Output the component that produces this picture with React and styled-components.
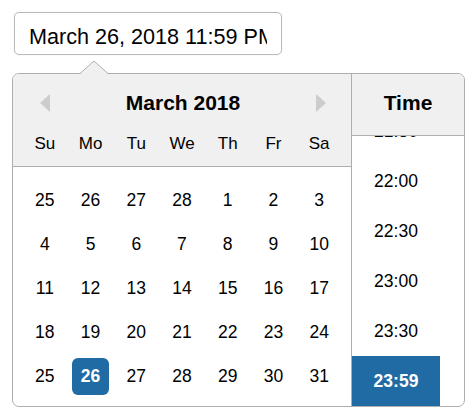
import React from "react";
import styled, { createGlobalStyle } from "styled-components";

const GlobalStyle = createGlobalStyle`
  html, body {
    margin: 0;
    background: #fff;
  }
  body {
    font-family: "Liberation Sans", Arial, Helvetica, sans-serif;
    color: #000;
  }
`;

const dayNames = ["Su", "Mo", "Tu", "We", "Th", "Fr", "Sa"];

const weeks = [
  [25, 26, 27, 28, 1, 2, 3],
  [4, 5, 6, 7, 8, 9, 10],
  [11, 12, 13, 14, 15, 16, 17],
  [18, 19, 20, 21, 22, 23, 24],
  [25, 26, 27, 28, 29, 30, 31],
];

const times = ["21:30", "22:00", "22:30", "23:00", "23:30", "23:59"];

const App = () => {
  return (
    <Page>
      <GlobalStyle />
      <DateInput type="text" readOnly value="March 26, 2018 11:59 PM" />
      <Popup>
        <Arrow width="28" height="14" viewBox="0 0 28 14">
          <polygon points="0,14 14,1 28,14" fill="#f0f0f0" />
          <polyline points="0,13.5 14,1 28,13.5" fill="none" stroke="#aeaeae" strokeWidth="1" />
        </Arrow>
        <Calendar>
          <CalendarHeader>
            <TitleRow>
              <NavButton $dir="prev" aria-label="Previous Month" />
              <MonthTitle>March 2018</MonthTitle>
              <NavButton $dir="next" aria-label="Next Month" />
            </TitleRow>
            <DayGrid>
              {dayNames.map((d) => (
                <DayName key={d}>{d}</DayName>
              ))}
            </DayGrid>
          </CalendarHeader>
          <Month>
            {weeks.map((week, wi) => (
              <DayGrid key={wi}>
                {week.map((day, di) => (
                  <DayCell key={di}>
                    <Day $selected={wi === 4 && day === 26}>{day}</Day>
                  </DayCell>
                ))}
              </DayGrid>
            ))}
          </Month>
        </Calendar>
        <TimeColumn>
          <TimeHeader>Time</TimeHeader>
          <TimeBox>
            <TimeList>
              {times.map((t) => (
                <TimeItem key={t} $selected={t === "23:59"}>
                  {t}
                </TimeItem>
              ))}
            </TimeList>
          </TimeBox>
        </TimeColumn>
      </Popup>
    </Page>
  );
};

export default App;

const Page = styled.div`
  padding: 12px 0 0 12px;
`;

const DateInput = styled.input`
  display: block;
  box-sizing: border-box;
  margin-left: 2px;
  width: 268px;
  height: 43px;
  padding: 6px 14px 0 14px;
  border: 1px solid #b9b9b9;
  border-radius: 5px;
  box-shadow: 0 0 2px rgba(0, 0, 0, 0.08);
  font-family: "Liberation Sans", Arial, Helvetica, sans-serif;
  font-size: 21.6px;
  color: #000;
  background: #fff;
  outline: none;
`;

const Popup = styled.div`
  position: relative;
  display: flex;
  margin-top: 18px;
  width: 451px;
  border: 1px solid #aeaeae;
  border-radius: 7px;
  background: #fff;
`;

const Arrow = styled.svg`
  position: absolute;
  top: -14px;
  left: 67px;
  display: block;
`;

const Calendar = styled.div`
  width: 338px;
`;

const CalendarHeader = styled.div`
  box-sizing: border-box;
  height: 93px;
  padding: 14px 0 0;
  background: #f0f0f0;
  border-bottom: 1px solid #aeaeae;
  border-top-left-radius: 6px;
`;

const TitleRow = styled.div`
  display: grid;
  grid-template-columns: 10px 1fr 10px;
  align-items: center;
  height: 30px;
  padding: 0 25px 0 27px;
`;

const NavButton = styled.span`
  display: block;
  width: 0;
  height: 0;
  border-top: 9.5px solid transparent;
  border-bottom: 9.5px solid transparent;
  ${({ $dir }) =>
    $dir === "prev"
      ? "border-right: 10px solid #cccccc;"
      : "border-left: 10px solid #cccccc;"}
`;

const MonthTitle = styled.div`
  text-align: center;
  font-size: 21px;
  font-weight: 700;
`;

const DayGrid = styled.div`
  display: grid;
  grid-template-columns: repeat(7, 1fr);
  padding: 0 9px;
`;

const DayName = styled.div`
  margin-top: 11px;
  height: 30px;
  line-height: 30px;
  text-align: center;
  font-size: 17px;
`;

const Month = styled.div`
  padding: 11px 0 8px;
`;

const DayCell = styled.div`
  display: flex;
  align-items: center;
  justify-content: center;
  height: 44px;
`;

const Day = styled.div`
  display: flex;
  align-items: center;
  justify-content: center;
  width: 37px;
  height: 37px;
  border-radius: 6px;
  font-size: 17.5px;
  font-weight: ${({ $selected }) => ($selected ? 700 : 400)};
  color: ${({ $selected }) => ($selected ? "#fff" : "#000")};
  background: ${({ $selected }) => ($selected ? "#216ba5" : "transparent")};
`;

const TimeColumn = styled.div`
  display: flex;
  flex-direction: column;
  width: 112px;
  border-left: 1px solid #aeaeae;
`;

const TimeHeader = styled.div`
  box-sizing: border-box;
  display: flex;
  align-items: center;
  justify-content: center;
  height: 62px;
  padding-bottom: 3px;
  background: #f0f0f0;
  border-bottom: 1px solid #aeaeae;
  border-top-right-radius: 6px;
  font-size: 21px;
  font-weight: 700;
`;

const TimeBox = styled.div`
  height: 270px;
  overflow: hidden;
  border-bottom-right-radius: 6px;
`;

const TimeList = styled.ul`
  display: flex;
  flex-direction: column;
  justify-content: flex-end;
  height: 100%;
  width: 88px;
  margin: 0;
  padding: 0;
  list-style: none;
`;

const TimeItem = styled.li`
  flex: 0 0 50px;
  display: flex;
  align-items: center;
  justify-content: center;
  font-size: 17.5px;
  font-weight: ${({ $selected }) => ($selected ? 700 : 400)};
  color: ${({ $selected }) => ($selected ? "#fff" : "#000")};
  background: ${({ $selected }) => ($selected ? "#216ba5" : "transparent")};
`;
